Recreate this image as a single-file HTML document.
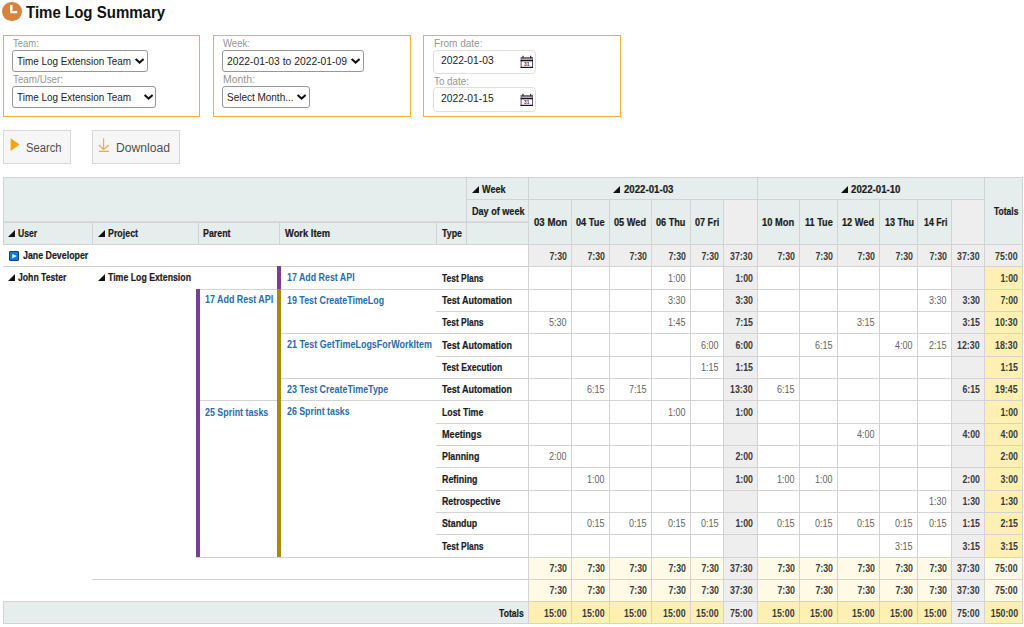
<!DOCTYPE html>
<html><head><meta charset="utf-8"><title>Time Log Summary</title>
<style>
html,body{margin:0;padding:0;background:#fff;}
body{width:1024px;height:627px;position:relative;overflow:hidden;font-family:"Liberation Sans",sans-serif;}
.r{position:absolute}
.t{position:absolute;white-space:nowrap;line-height:1;}
.tri{position:absolute;width:0;height:0;border-left:7px solid transparent;border-bottom:7px solid #111;}
.title{position:absolute;left:26px;top:3px;font-size:15px;font-weight:bold;color:#111;white-space:nowrap;line-height:1;}
.clock{position:absolute;left:2px;top:1.5px;width:19.5px;height:19.5px;border-radius:50%;background:#d9823d;}
.box{position:absolute;top:35px;height:80px;border:1px solid #f8ae35;box-sizing:border-box;}
.lbl{position:absolute;font-size:10.5px;color:#8a8a8a;white-space:nowrap;line-height:1;}
.sel{position:absolute;height:22px;border:1px solid #979797;border-radius:3px;background:#fff;box-sizing:border-box;}
.seltxt{position:absolute;font-size:10.5px;color:#222;white-space:nowrap;line-height:1;}
.inp{position:absolute;border:1px solid #dedede;border-radius:4px;background:#fff;box-sizing:border-box;}
.btn{position:absolute;top:130px;height:34px;background:#f6f6f6;border:1px solid #d9d9d9;box-sizing:border-box;}
.btxt{position:absolute;font-size:12.5px;color:#444;white-space:nowrap;line-height:1;}

</style></head><body>
<div class="clock"><svg width="20" height="20" style="position:absolute;left:0;top:0"><path d="M9.3 3.1 V10.1 H15.2" stroke="#fff" stroke-width="2.4" fill="none"/></svg></div>

<div class="box" style="left:3px;width:197px;height:82px"></div>
<div class="box" style="left:213px;width:198px;height:82px"></div>
<div class="box" style="left:423px;width:198px;height:82px"></div>

<div class="sel" style="left:12px;top:50px;width:136px"></div>
<svg class="r" style="left:134px;top:57px" width="11" height="8"><polyline points="1.6,1.9 5.6,5.6 9.6,1.9" stroke="#111" stroke-width="2" fill="none"/></svg>
<div class="sel" style="left:12px;top:86px;width:144px"></div>
<svg class="r" style="left:143px;top:93px" width="11" height="8"><polyline points="1.6,1.9 5.6,5.6 9.6,1.9" stroke="#111" stroke-width="2" fill="none"/></svg>

<div class="sel" style="left:222px;top:50px;width:142px"></div>
<svg class="r" style="left:350px;top:57px" width="11" height="8"><polyline points="1.6,1.9 5.6,5.6 9.6,1.9" stroke="#111" stroke-width="2" fill="none"/></svg>
<div class="sel" style="left:222px;top:86px;width:88px"></div>
<svg class="r" style="left:296px;top:93px" width="11" height="8"><polyline points="1.6,1.9 5.6,5.6 9.6,1.9" stroke="#111" stroke-width="2" fill="none"/></svg>

<div class="inp" style="left:433px;top:50px;width:103px;height:24px"></div>
<svg class="r" style="left:518px;top:54px" width="17" height="16"><rect x="2.6" y="3" width="1" height="11" fill="#6a4a7a"/><rect x="14" y="3" width="1" height="11" fill="#6a4a7a"/><rect x="3" y="3" width="11.5" height="2.6" fill="#7a7a7a"/><rect x="2.6" y="6" width="12.4" height="1.3" fill="#161616"/><rect x="2.6" y="12.8" width="12.4" height="1.2" fill="#161616"/><rect x="4.3" y="1.8" width="1.3" height="2.4" fill="#4a1a5a"/><rect x="12" y="1.8" width="1.3" height="2.4" fill="#4a1a5a"/><text x="8.8" y="11.8" font-size="5" font-family="Liberation Sans" font-weight="bold" text-anchor="middle" fill="#7a2a4a">31</text></svg>
<div class="inp" style="left:433px;top:87px;width:103px;height:25px"></div>
<svg class="r" style="left:518px;top:92px" width="17" height="16"><rect x="2.6" y="3" width="1" height="11" fill="#6a4a7a"/><rect x="14" y="3" width="1" height="11" fill="#6a4a7a"/><rect x="3" y="3" width="11.5" height="2.6" fill="#7a7a7a"/><rect x="2.6" y="6" width="12.4" height="1.3" fill="#161616"/><rect x="2.6" y="12.8" width="12.4" height="1.2" fill="#161616"/><rect x="4.3" y="1.8" width="1.3" height="2.4" fill="#4a1a5a"/><rect x="12" y="1.8" width="1.3" height="2.4" fill="#4a1a5a"/><text x="8.8" y="11.8" font-size="5" font-family="Liberation Sans" font-weight="bold" text-anchor="middle" fill="#7a2a4a">31</text></svg>

<div class="btn" style="left:3px;width:68px"></div>
<svg class="r" style="left:10px;top:138px" width="10" height="14"><polygon points="0.6,0.3 9.5,6.5 0.6,13" fill="#f6a40c"/></svg>
<div class="btn" style="left:92px;width:88px"></div>
<svg class="r" style="left:98px;top:138px" width="12" height="14"><path d="M5.6 0.2 V11.4 M1 7 L5.6 11.5 L10.7 7 M0.9 13.4 H11" stroke="#f7a935" stroke-width="1.15" fill="none"/></svg>
<div class="r" style="left:8.5px;top:251px;width:10.2px;height:9.9px;background:#0b7be2;box-sizing:border-box;border:1px solid #0f3e72;border-radius:1px"></div>
<svg class="r" style="left:8.5px;top:251px" width="11" height="10"><polygon points="3.3,2.9 7.6,5.1 3.3,7.4" fill="#fff"/></svg>

<div id="grid">
<div class="r" style="left:3px;top:177px;width:1020px;height:67px;background:#e5eded"></div>
<div class="r" style="left:723px;top:199px;width:34px;height:45px;background:#eeeeee"></div>
<div class="r" style="left:951px;top:199px;width:33px;height:45px;background:#eeeeee"></div>
<div class="r" style="left:528px;top:244px;width:495px;height:22px;background:#eeeeee"></div>
<div class="r" style="left:723px;top:266px;width:34px;height:23px;background:#eeeeee"></div>
<div class="r" style="left:951px;top:266px;width:33px;height:23px;background:#eeeeee"></div>
<div class="r" style="left:984px;top:266px;width:39px;height:23px;background:#fdf0b2"></div>
<div class="r" style="left:723px;top:289px;width:34px;height:22px;background:#eeeeee"></div>
<div class="r" style="left:951px;top:289px;width:33px;height:22px;background:#eeeeee"></div>
<div class="r" style="left:984px;top:289px;width:39px;height:22px;background:#fdf0b2"></div>
<div class="r" style="left:723px;top:311px;width:34px;height:22px;background:#eeeeee"></div>
<div class="r" style="left:951px;top:311px;width:33px;height:22px;background:#eeeeee"></div>
<div class="r" style="left:984px;top:311px;width:39px;height:22px;background:#fdf0b2"></div>
<div class="r" style="left:723px;top:333px;width:34px;height:23px;background:#eeeeee"></div>
<div class="r" style="left:951px;top:333px;width:33px;height:23px;background:#eeeeee"></div>
<div class="r" style="left:984px;top:333px;width:39px;height:23px;background:#fdf0b2"></div>
<div class="r" style="left:723px;top:356px;width:34px;height:22px;background:#eeeeee"></div>
<div class="r" style="left:951px;top:356px;width:33px;height:22px;background:#eeeeee"></div>
<div class="r" style="left:984px;top:356px;width:39px;height:22px;background:#fdf0b2"></div>
<div class="r" style="left:723px;top:378px;width:34px;height:22px;background:#eeeeee"></div>
<div class="r" style="left:951px;top:378px;width:33px;height:22px;background:#eeeeee"></div>
<div class="r" style="left:984px;top:378px;width:39px;height:22px;background:#fdf0b2"></div>
<div class="r" style="left:723px;top:400px;width:34px;height:23px;background:#eeeeee"></div>
<div class="r" style="left:951px;top:400px;width:33px;height:23px;background:#eeeeee"></div>
<div class="r" style="left:984px;top:400px;width:39px;height:23px;background:#fdf0b2"></div>
<div class="r" style="left:723px;top:423px;width:34px;height:22px;background:#eeeeee"></div>
<div class="r" style="left:951px;top:423px;width:33px;height:22px;background:#eeeeee"></div>
<div class="r" style="left:984px;top:423px;width:39px;height:22px;background:#fdf0b2"></div>
<div class="r" style="left:723px;top:445px;width:34px;height:22px;background:#eeeeee"></div>
<div class="r" style="left:951px;top:445px;width:33px;height:22px;background:#eeeeee"></div>
<div class="r" style="left:984px;top:445px;width:39px;height:22px;background:#fdf0b2"></div>
<div class="r" style="left:723px;top:467px;width:34px;height:23px;background:#eeeeee"></div>
<div class="r" style="left:951px;top:467px;width:33px;height:23px;background:#eeeeee"></div>
<div class="r" style="left:984px;top:467px;width:39px;height:23px;background:#fdf0b2"></div>
<div class="r" style="left:723px;top:490px;width:34px;height:22px;background:#eeeeee"></div>
<div class="r" style="left:951px;top:490px;width:33px;height:22px;background:#eeeeee"></div>
<div class="r" style="left:984px;top:490px;width:39px;height:22px;background:#fdf0b2"></div>
<div class="r" style="left:723px;top:512px;width:34px;height:22px;background:#eeeeee"></div>
<div class="r" style="left:951px;top:512px;width:33px;height:22px;background:#eeeeee"></div>
<div class="r" style="left:984px;top:512px;width:39px;height:22px;background:#fdf0b2"></div>
<div class="r" style="left:723px;top:534px;width:34px;height:23px;background:#eeeeee"></div>
<div class="r" style="left:951px;top:534px;width:33px;height:23px;background:#eeeeee"></div>
<div class="r" style="left:984px;top:534px;width:39px;height:23px;background:#fdf0b2"></div>
<div class="r" style="left:723px;top:557px;width:34px;height:22px;background:#eeeeee"></div>
<div class="r" style="left:951px;top:557px;width:33px;height:22px;background:#eeeeee"></div>
<div class="r" style="left:984px;top:557px;width:39px;height:22px;background:#fefae6"></div>
<div class="r" style="left:528px;top:557px;width:195px;height:22px;background:#fefae6"></div>
<div class="r" style="left:757px;top:557px;width:194px;height:22px;background:#fefae6"></div>
<div class="r" style="left:723px;top:579px;width:34px;height:22px;background:#eeeeee"></div>
<div class="r" style="left:951px;top:579px;width:33px;height:22px;background:#eeeeee"></div>
<div class="r" style="left:984px;top:579px;width:39px;height:22px;background:#fefae6"></div>
<div class="r" style="left:528px;top:579px;width:195px;height:22px;background:#fefae6"></div>
<div class="r" style="left:757px;top:579px;width:194px;height:22px;background:#fefae6"></div>
<div class="r" style="left:723px;top:601px;width:34px;height:22px;background:#eeeeee"></div>
<div class="r" style="left:951px;top:601px;width:33px;height:22px;background:#eeeeee"></div>
<div class="r" style="left:984px;top:601px;width:39px;height:22px;background:#fdf0b2"></div>
<div class="r" style="left:528px;top:601px;width:195px;height:22px;background:#fdf0b2"></div>
<div class="r" style="left:757px;top:601px;width:194px;height:22px;background:#fdf0b2"></div>
<div class="r" style="left:3px;top:601px;width:525px;height:22px;background:#e5eded"></div>
<div class="r" style="left:3px;top:177px;width:1020px;height:1px;background:#d3d3d3"></div>
<div class="r" style="left:466px;top:199px;width:519px;height:1px;background:#d3d3d3"></div>
<div class="r" style="left:3px;top:221px;width:526px;height:1px;background:#dcdcdc"></div>
<div class="r" style="left:3px;top:222px;width:526px;height:1px;background:#d3d3d3"></div>
<div class="r" style="left:3px;top:244px;width:1020px;height:1px;background:#d3d3d3"></div>
<div class="r" style="left:3px;top:266px;width:1020px;height:1px;background:#d3d3d3"></div>
<div class="r" style="left:196px;top:289px;width:827px;height:1px;background:#d3d3d3"></div>
<div class="r" style="left:436px;top:311px;width:587px;height:1px;background:#d3d3d3"></div>
<div class="r" style="left:279px;top:333px;width:744px;height:1px;background:#d3d3d3"></div>
<div class="r" style="left:436px;top:356px;width:587px;height:1px;background:#d3d3d3"></div>
<div class="r" style="left:279px;top:378px;width:744px;height:1px;background:#d3d3d3"></div>
<div class="r" style="left:196px;top:400px;width:827px;height:1px;background:#d3d3d3"></div>
<div class="r" style="left:436px;top:423px;width:587px;height:1px;background:#d3d3d3"></div>
<div class="r" style="left:436px;top:445px;width:587px;height:1px;background:#d3d3d3"></div>
<div class="r" style="left:436px;top:467px;width:587px;height:1px;background:#d3d3d3"></div>
<div class="r" style="left:436px;top:490px;width:587px;height:1px;background:#d3d3d3"></div>
<div class="r" style="left:436px;top:512px;width:587px;height:1px;background:#d3d3d3"></div>
<div class="r" style="left:436px;top:534px;width:587px;height:1px;background:#d3d3d3"></div>
<div class="r" style="left:196px;top:557px;width:827px;height:1px;background:#d3d3d3"></div>
<div class="r" style="left:92px;top:579px;width:931px;height:1px;background:#d3d3d3"></div>
<div class="r" style="left:3px;top:601px;width:1020px;height:1px;background:#d3d3d3"></div>
<div class="r" style="left:3px;top:623px;width:1020px;height:1px;background:#d3d3d3"></div>
<div class="r" style="left:3px;top:177px;width:1px;height:68px;background:#d3d3d3"></div>
<div class="r" style="left:3px;top:601px;width:1px;height:23px;background:#d3d3d3"></div>
<div class="r" style="left:92px;top:222px;width:1px;height:23px;background:#d3d3d3"></div>
<div class="r" style="left:198px;top:222px;width:1px;height:23px;background:#d3d3d3"></div>
<div class="r" style="left:279px;top:222px;width:1px;height:23px;background:#d3d3d3"></div>
<div class="r" style="left:436px;top:222px;width:1px;height:23px;background:#d3d3d3"></div>
<div class="r" style="left:466px;top:177px;width:1px;height:68px;background:#d3d3d3"></div>
<div class="r" style="left:528px;top:177px;width:1px;height:447px;background:#d3d3d3"></div>
<div class="r" style="left:571px;top:199px;width:1px;height:425px;background:#d3d3d3"></div>
<div class="r" style="left:609px;top:199px;width:1px;height:425px;background:#d3d3d3"></div>
<div class="r" style="left:651px;top:199px;width:1px;height:425px;background:#d3d3d3"></div>
<div class="r" style="left:690px;top:199px;width:1px;height:425px;background:#d3d3d3"></div>
<div class="r" style="left:723px;top:199px;width:1px;height:425px;background:#d3d3d3"></div>
<div class="r" style="left:799px;top:199px;width:1px;height:425px;background:#d3d3d3"></div>
<div class="r" style="left:837px;top:199px;width:1px;height:425px;background:#d3d3d3"></div>
<div class="r" style="left:879px;top:199px;width:1px;height:425px;background:#d3d3d3"></div>
<div class="r" style="left:917px;top:199px;width:1px;height:425px;background:#d3d3d3"></div>
<div class="r" style="left:951px;top:199px;width:1px;height:425px;background:#d3d3d3"></div>
<div class="r" style="left:757px;top:177px;width:1px;height:447px;background:#d3d3d3"></div>
<div class="r" style="left:984px;top:177px;width:1px;height:447px;background:#d3d3d3"></div>
<div class="r" style="left:1022px;top:177px;width:1px;height:447px;background:#d3d3d3"></div>
<div class="r" style="left:277px;top:266px;width:4px;height:23px;background:#7a3e96"></div>
<div class="r" style="left:277px;top:289px;width:4px;height:268px;background:#a68a0c"></div>
<div class="r" style="left:196px;top:289px;width:4px;height:268px;background:#7a3e96"></div>
<div class="tri" style="left:8px;top:230px"></div>
<div class="tri" style="left:98px;top:230px"></div>
<div class="tri" style="left:471.6px;top:186px"></div>
<div class="tri" style="left:613.4px;top:186px"></div>
<div class="tri" style="left:840.5px;top:186px"></div>
<div class="tri" style="left:7.8px;top:274.4px"></div>
<div class="tri" style="left:97.5px;top:274.3px"></div>
<span class="t" style="left:482.30px;top:184.84px;font-size:10px;font-weight:bold;color:#1b1b1b;-webkit-text-stroke:0.2px;transform:scaleX(0.9093);transform-origin:0 0">Week</span>
<span class="t" style="left:623.60px;top:184.73px;font-size:10px;font-weight:bold;color:#1b1b1b;-webkit-text-stroke:0.2px;transform:scaleX(0.9657);transform-origin:0 0">2022-01-03</span>
<span class="t" style="left:851.40px;top:184.73px;font-size:10px;font-weight:bold;color:#1b1b1b;-webkit-text-stroke:0.2px;transform:scaleX(0.9676);transform-origin:0 0">2022-01-10</span>
<span class="t" style="left:471.80px;top:207.13px;font-size:10px;font-weight:bold;color:#1b1b1b;-webkit-text-stroke:0.2px;transform:scaleX(0.9081);transform-origin:0 0">Day of week</span>
<span class="t" style="left:533.70px;top:217.84px;font-size:10px;font-weight:bold;color:#1b1b1b;-webkit-text-stroke:0.2px;transform:scaleX(0.9636);transform-origin:0 0">03 Mon</span>
<span class="t" style="left:576.30px;top:217.84px;font-size:10px;font-weight:bold;color:#1b1b1b;-webkit-text-stroke:0.2px;transform:scaleX(0.9212);transform-origin:0 0">04 Tue</span>
<span class="t" style="left:614.00px;top:217.84px;font-size:10px;font-weight:bold;color:#1b1b1b;-webkit-text-stroke:0.2px;transform:scaleX(0.9184);transform-origin:0 0">05 Wed</span>
<span class="t" style="left:656.20px;top:217.84px;font-size:10px;font-weight:bold;color:#1b1b1b;-webkit-text-stroke:0.2px;transform:scaleX(0.9121);transform-origin:0 0">06 Thu</span>
<span class="t" style="left:694.90px;top:217.84px;font-size:10px;font-weight:bold;color:#1b1b1b;-webkit-text-stroke:0.2px;transform:scaleX(0.9068);transform-origin:0 0">07 Fri</span>
<span class="t" style="left:762.30px;top:217.84px;font-size:10px;font-weight:bold;color:#1b1b1b;-webkit-text-stroke:0.2px;transform:scaleX(0.9317);transform-origin:0 0">10 Mon</span>
<span class="t" style="left:804.70px;top:217.84px;font-size:10px;font-weight:bold;color:#1b1b1b;-webkit-text-stroke:0.2px;transform:scaleX(0.9115);transform-origin:0 0">11 Tue</span>
<span class="t" style="left:842.30px;top:217.84px;font-size:10px;font-weight:bold;color:#1b1b1b;-webkit-text-stroke:0.2px;transform:scaleX(0.9213);transform-origin:0 0">12 Wed</span>
<span class="t" style="left:884.50px;top:217.84px;font-size:10px;font-weight:bold;color:#1b1b1b;-webkit-text-stroke:0.2px;transform:scaleX(0.8997);transform-origin:0 0">13 Thu</span>
<span class="t" style="left:923.50px;top:217.84px;font-size:10px;font-weight:bold;color:#1b1b1b;-webkit-text-stroke:0.2px;transform:scaleX(0.8806);transform-origin:0 0">14 Fri</span>
<span class="t" style="left:993.60px;top:207.03px;font-size:10px;font-weight:bold;color:#1b1b1b;-webkit-text-stroke:0.2px;transform:scaleX(0.8496);transform-origin:0 0">Totals</span>
<span class="t" style="left:18.20px;top:228.53px;font-size:10px;font-weight:bold;color:#1b1b1b;-webkit-text-stroke:0.2px;transform:scaleX(0.8584);transform-origin:0 0">User</span>
<span class="t" style="left:108.00px;top:228.53px;font-size:10px;font-weight:bold;color:#1b1b1b;-webkit-text-stroke:0.2px;transform:scaleX(0.8848);transform-origin:0 0">Project</span>
<span class="t" style="left:202.90px;top:228.53px;font-size:10px;font-weight:bold;color:#1b1b1b;-webkit-text-stroke:0.2px;transform:scaleX(0.8835);transform-origin:0 0">Parent</span>
<span class="t" style="left:285.00px;top:228.53px;font-size:10px;font-weight:bold;color:#1b1b1b;-webkit-text-stroke:0.2px;transform:scaleX(0.9342);transform-origin:0 0">Work Item</span>
<span class="t" style="left:442.00px;top:228.53px;font-size:10px;font-weight:bold;color:#1b1b1b;-webkit-text-stroke:0.2px;transform:scaleX(0.8846);transform-origin:0 0">Type</span>
<span class="t" style="left:22.70px;top:250.73px;font-size:10px;font-weight:bold;color:#1b1b1b;-webkit-text-stroke:0.2px;transform:scaleX(0.8832);transform-origin:0 0">Jane Developer</span>
<span class="t" style="left:18.00px;top:273.04px;font-size:10px;font-weight:bold;color:#1b1b1b;-webkit-text-stroke:0.2px;transform:scaleX(0.8653);transform-origin:0 0">John Tester</span>
<span class="t" style="left:108.00px;top:272.84px;font-size:10px;font-weight:bold;color:#1b1b1b;-webkit-text-stroke:0.2px;transform:scaleX(0.8751);transform-origin:0 0">Time Log Extension</span>
<span class="t" style="left:287.20px;top:272.54px;font-size:10px;font-weight:bold;color:#266cae;transform:scaleX(0.8837);transform-origin:0 0">17 Add Rest API</span>
<span class="t" style="left:204.80px;top:295.34px;font-size:10px;font-weight:bold;color:#266cae;transform:scaleX(0.8915);transform-origin:0 0">17 Add Rest API</span>
<span class="t" style="left:286.90px;top:295.54px;font-size:10px;font-weight:bold;color:#266cae;transform:scaleX(0.8898);transform-origin:0 0">19 Test CreateTimeLog</span>
<span class="t" style="left:287.00px;top:340.14px;font-size:10px;font-weight:bold;color:#266cae;transform:scaleX(0.8966);transform-origin:0 0">21 Test GetTimeLogsForWorkItem</span>
<span class="t" style="left:287.20px;top:385.14px;font-size:10px;font-weight:bold;color:#266cae;transform:scaleX(0.8934);transform-origin:0 0">23 Test CreateTimeType</span>
<span class="t" style="left:204.60px;top:407.54px;font-size:10px;font-weight:bold;color:#266cae;transform:scaleX(0.8896);transform-origin:0 0">25 Sprint tasks</span>
<span class="t" style="left:287.20px;top:407.14px;font-size:10px;font-weight:bold;color:#266cae;transform:scaleX(0.8798);transform-origin:0 0">26 Sprint tasks</span>
<span class="t" style="left:441.80px;top:273.74px;font-size:10px;font-weight:bold;color:#1b1b1b;-webkit-text-stroke:0.2px;transform:scaleX(0.8421);transform-origin:0 0">Test Plans</span>
<span class="t" style="left:441.80px;top:296.06px;font-size:10px;font-weight:bold;color:#1b1b1b;-webkit-text-stroke:0.2px;transform:scaleX(0.9000);transform-origin:0 0">Test Automation</span>
<span class="t" style="left:441.80px;top:318.39px;font-size:10px;font-weight:bold;color:#1b1b1b;-webkit-text-stroke:0.2px;transform:scaleX(0.8421);transform-origin:0 0">Test Plans</span>
<span class="t" style="left:441.80px;top:340.73px;font-size:10px;font-weight:bold;color:#1b1b1b;-webkit-text-stroke:0.2px;transform:scaleX(0.9000);transform-origin:0 0">Test Automation</span>
<span class="t" style="left:441.80px;top:363.06px;font-size:10px;font-weight:bold;color:#1b1b1b;-webkit-text-stroke:0.2px;transform:scaleX(0.8552);transform-origin:0 0">Test Execution</span>
<span class="t" style="left:441.80px;top:385.38px;font-size:10px;font-weight:bold;color:#1b1b1b;-webkit-text-stroke:0.2px;transform:scaleX(0.9000);transform-origin:0 0">Test Automation</span>
<span class="t" style="left:441.80px;top:407.72px;font-size:10px;font-weight:bold;color:#1b1b1b;-webkit-text-stroke:0.2px;transform:scaleX(0.8778);transform-origin:0 0">Lost Time</span>
<span class="t" style="left:441.80px;top:430.05px;font-size:10px;font-weight:bold;color:#1b1b1b;-webkit-text-stroke:0.2px;transform:scaleX(0.9113);transform-origin:0 0">Meetings</span>
<span class="t" style="left:441.80px;top:452.38px;font-size:10px;font-weight:bold;color:#1b1b1b;-webkit-text-stroke:0.2px;transform:scaleX(0.8832);transform-origin:0 0">Planning</span>
<span class="t" style="left:441.80px;top:474.70px;font-size:10px;font-weight:bold;color:#1b1b1b;-webkit-text-stroke:0.2px;transform:scaleX(0.8875);transform-origin:0 0">Refining</span>
<span class="t" style="left:441.80px;top:497.03px;font-size:10px;font-weight:bold;color:#1b1b1b;-webkit-text-stroke:0.2px;transform:scaleX(0.8815);transform-origin:0 0">Retrospective</span>
<span class="t" style="left:441.80px;top:519.36px;font-size:10px;font-weight:bold;color:#1b1b1b;-webkit-text-stroke:0.2px;transform:scaleX(0.8775);transform-origin:0 0">Standup</span>
<span class="t" style="left:441.80px;top:541.69px;font-size:10px;font-weight:bold;color:#1b1b1b;-webkit-text-stroke:0.2px;transform:scaleX(0.8421);transform-origin:0 0">Test Plans</span>
<span class="t" style="right:500.00px;top:608.93px;font-size:10px;font-weight:bold;color:#1b1b1b;-webkit-text-stroke:0.2px;transform:scaleX(0.8566);transform-origin:100% 0">Totals</span>
<span class="t" style="right:457.30px;top:251.84px;font-size:10px;font-weight:bold;color:#3a3a3a;transform:scaleX(0.8800);transform-origin:100% 0">7:30</span>
<span class="t" style="right:419.30px;top:251.84px;font-size:10px;font-weight:bold;color:#3a3a3a;transform:scaleX(0.8800);transform-origin:100% 0">7:30</span>
<span class="t" style="right:377.30px;top:251.84px;font-size:10px;font-weight:bold;color:#3a3a3a;transform:scaleX(0.8800);transform-origin:100% 0">7:30</span>
<span class="t" style="right:338.30px;top:251.84px;font-size:10px;font-weight:bold;color:#3a3a3a;transform:scaleX(0.8800);transform-origin:100% 0">7:30</span>
<span class="t" style="right:305.30px;top:251.84px;font-size:10px;font-weight:bold;color:#3a3a3a;transform:scaleX(0.8800);transform-origin:100% 0">7:30</span>
<span class="t" style="right:271.30px;top:251.84px;font-size:10px;font-weight:bold;color:#3a3a3a;transform:scaleX(0.8800);transform-origin:100% 0">37:30</span>
<span class="t" style="right:229.30px;top:251.84px;font-size:10px;font-weight:bold;color:#3a3a3a;transform:scaleX(0.8800);transform-origin:100% 0">7:30</span>
<span class="t" style="right:191.30px;top:251.84px;font-size:10px;font-weight:bold;color:#3a3a3a;transform:scaleX(0.8800);transform-origin:100% 0">7:30</span>
<span class="t" style="right:149.30px;top:251.84px;font-size:10px;font-weight:bold;color:#3a3a3a;transform:scaleX(0.8800);transform-origin:100% 0">7:30</span>
<span class="t" style="right:111.30px;top:251.84px;font-size:10px;font-weight:bold;color:#3a3a3a;transform:scaleX(0.8800);transform-origin:100% 0">7:30</span>
<span class="t" style="right:77.30px;top:251.84px;font-size:10px;font-weight:bold;color:#3a3a3a;transform:scaleX(0.8800);transform-origin:100% 0">7:30</span>
<span class="t" style="right:44.30px;top:251.84px;font-size:10px;font-weight:bold;color:#3a3a3a;transform:scaleX(0.8800);transform-origin:100% 0">37:30</span>
<span class="t" style="right:6.30px;top:251.84px;font-size:10px;font-weight:bold;color:#3a3a3a;transform:scaleX(0.8800);transform-origin:100% 0">75:00</span>
<span class="t" style="right:338.30px;top:273.74px;font-size:10px;color:#636363;transform:scaleX(0.9000);transform-origin:100% 0">1:00</span>
<span class="t" style="right:271.30px;top:273.74px;font-size:10px;font-weight:bold;color:#3a3a3a;transform:scaleX(0.8800);transform-origin:100% 0">1:00</span>
<span class="t" style="right:6.30px;top:273.74px;font-size:10px;font-weight:bold;color:#3a3a3a;transform:scaleX(0.8800);transform-origin:100% 0">1:00</span>
<span class="t" style="right:338.30px;top:296.06px;font-size:10px;color:#636363;transform:scaleX(0.9000);transform-origin:100% 0">3:30</span>
<span class="t" style="right:271.30px;top:296.06px;font-size:10px;font-weight:bold;color:#3a3a3a;transform:scaleX(0.8800);transform-origin:100% 0">3:30</span>
<span class="t" style="right:77.30px;top:296.06px;font-size:10px;color:#636363;transform:scaleX(0.9000);transform-origin:100% 0">3:30</span>
<span class="t" style="right:44.30px;top:296.06px;font-size:10px;font-weight:bold;color:#3a3a3a;transform:scaleX(0.8800);transform-origin:100% 0">3:30</span>
<span class="t" style="right:6.30px;top:296.06px;font-size:10px;font-weight:bold;color:#3a3a3a;transform:scaleX(0.8800);transform-origin:100% 0">7:00</span>
<span class="t" style="right:457.30px;top:318.39px;font-size:10px;color:#636363;transform:scaleX(0.9000);transform-origin:100% 0">5:30</span>
<span class="t" style="right:338.30px;top:318.39px;font-size:10px;color:#636363;transform:scaleX(0.9000);transform-origin:100% 0">1:45</span>
<span class="t" style="right:271.30px;top:318.39px;font-size:10px;font-weight:bold;color:#3a3a3a;transform:scaleX(0.8800);transform-origin:100% 0">7:15</span>
<span class="t" style="right:149.30px;top:318.39px;font-size:10px;color:#636363;transform:scaleX(0.9000);transform-origin:100% 0">3:15</span>
<span class="t" style="right:44.30px;top:318.39px;font-size:10px;font-weight:bold;color:#3a3a3a;transform:scaleX(0.8800);transform-origin:100% 0">3:15</span>
<span class="t" style="right:6.30px;top:318.39px;font-size:10px;font-weight:bold;color:#3a3a3a;transform:scaleX(0.8800);transform-origin:100% 0">10:30</span>
<span class="t" style="right:305.30px;top:340.73px;font-size:10px;color:#636363;transform:scaleX(0.9000);transform-origin:100% 0">6:00</span>
<span class="t" style="right:271.30px;top:340.73px;font-size:10px;font-weight:bold;color:#3a3a3a;transform:scaleX(0.8800);transform-origin:100% 0">6:00</span>
<span class="t" style="right:191.30px;top:340.73px;font-size:10px;color:#636363;transform:scaleX(0.9000);transform-origin:100% 0">6:15</span>
<span class="t" style="right:111.30px;top:340.73px;font-size:10px;color:#636363;transform:scaleX(0.9000);transform-origin:100% 0">4:00</span>
<span class="t" style="right:77.30px;top:340.73px;font-size:10px;color:#636363;transform:scaleX(0.9000);transform-origin:100% 0">2:15</span>
<span class="t" style="right:44.30px;top:340.73px;font-size:10px;font-weight:bold;color:#3a3a3a;transform:scaleX(0.8800);transform-origin:100% 0">12:30</span>
<span class="t" style="right:6.30px;top:340.73px;font-size:10px;font-weight:bold;color:#3a3a3a;transform:scaleX(0.8800);transform-origin:100% 0">18:30</span>
<span class="t" style="right:305.30px;top:363.06px;font-size:10px;color:#636363;transform:scaleX(0.9000);transform-origin:100% 0">1:15</span>
<span class="t" style="right:271.30px;top:363.06px;font-size:10px;font-weight:bold;color:#3a3a3a;transform:scaleX(0.8800);transform-origin:100% 0">1:15</span>
<span class="t" style="right:6.30px;top:363.06px;font-size:10px;font-weight:bold;color:#3a3a3a;transform:scaleX(0.8800);transform-origin:100% 0">1:15</span>
<span class="t" style="right:419.30px;top:385.38px;font-size:10px;color:#636363;transform:scaleX(0.9000);transform-origin:100% 0">6:15</span>
<span class="t" style="right:377.30px;top:385.38px;font-size:10px;color:#636363;transform:scaleX(0.9000);transform-origin:100% 0">7:15</span>
<span class="t" style="right:271.30px;top:385.38px;font-size:10px;font-weight:bold;color:#3a3a3a;transform:scaleX(0.8800);transform-origin:100% 0">13:30</span>
<span class="t" style="right:229.30px;top:385.38px;font-size:10px;color:#636363;transform:scaleX(0.9000);transform-origin:100% 0">6:15</span>
<span class="t" style="right:44.30px;top:385.38px;font-size:10px;font-weight:bold;color:#3a3a3a;transform:scaleX(0.8800);transform-origin:100% 0">6:15</span>
<span class="t" style="right:6.30px;top:385.38px;font-size:10px;font-weight:bold;color:#3a3a3a;transform:scaleX(0.8800);transform-origin:100% 0">19:45</span>
<span class="t" style="right:338.30px;top:407.72px;font-size:10px;color:#636363;transform:scaleX(0.9000);transform-origin:100% 0">1:00</span>
<span class="t" style="right:271.30px;top:407.72px;font-size:10px;font-weight:bold;color:#3a3a3a;transform:scaleX(0.8800);transform-origin:100% 0">1:00</span>
<span class="t" style="right:6.30px;top:407.72px;font-size:10px;font-weight:bold;color:#3a3a3a;transform:scaleX(0.8800);transform-origin:100% 0">1:00</span>
<span class="t" style="right:149.30px;top:430.05px;font-size:10px;color:#636363;transform:scaleX(0.9000);transform-origin:100% 0">4:00</span>
<span class="t" style="right:44.30px;top:430.05px;font-size:10px;font-weight:bold;color:#3a3a3a;transform:scaleX(0.8800);transform-origin:100% 0">4:00</span>
<span class="t" style="right:6.30px;top:430.05px;font-size:10px;font-weight:bold;color:#3a3a3a;transform:scaleX(0.8800);transform-origin:100% 0">4:00</span>
<span class="t" style="right:457.30px;top:452.38px;font-size:10px;color:#636363;transform:scaleX(0.9000);transform-origin:100% 0">2:00</span>
<span class="t" style="right:271.30px;top:452.38px;font-size:10px;font-weight:bold;color:#3a3a3a;transform:scaleX(0.8800);transform-origin:100% 0">2:00</span>
<span class="t" style="right:6.30px;top:452.38px;font-size:10px;font-weight:bold;color:#3a3a3a;transform:scaleX(0.8800);transform-origin:100% 0">2:00</span>
<span class="t" style="right:419.30px;top:474.70px;font-size:10px;color:#636363;transform:scaleX(0.9000);transform-origin:100% 0">1:00</span>
<span class="t" style="right:271.30px;top:474.70px;font-size:10px;font-weight:bold;color:#3a3a3a;transform:scaleX(0.8800);transform-origin:100% 0">1:00</span>
<span class="t" style="right:229.30px;top:474.70px;font-size:10px;color:#636363;transform:scaleX(0.9000);transform-origin:100% 0">1:00</span>
<span class="t" style="right:191.30px;top:474.70px;font-size:10px;color:#636363;transform:scaleX(0.9000);transform-origin:100% 0">1:00</span>
<span class="t" style="right:44.30px;top:474.70px;font-size:10px;font-weight:bold;color:#3a3a3a;transform:scaleX(0.8800);transform-origin:100% 0">2:00</span>
<span class="t" style="right:6.30px;top:474.70px;font-size:10px;font-weight:bold;color:#3a3a3a;transform:scaleX(0.8800);transform-origin:100% 0">3:00</span>
<span class="t" style="right:77.30px;top:497.03px;font-size:10px;color:#636363;transform:scaleX(0.9000);transform-origin:100% 0">1:30</span>
<span class="t" style="right:44.30px;top:497.03px;font-size:10px;font-weight:bold;color:#3a3a3a;transform:scaleX(0.8800);transform-origin:100% 0">1:30</span>
<span class="t" style="right:6.30px;top:497.03px;font-size:10px;font-weight:bold;color:#3a3a3a;transform:scaleX(0.8800);transform-origin:100% 0">1:30</span>
<span class="t" style="right:419.30px;top:519.36px;font-size:10px;color:#636363;transform:scaleX(0.9000);transform-origin:100% 0">0:15</span>
<span class="t" style="right:377.30px;top:519.36px;font-size:10px;color:#636363;transform:scaleX(0.9000);transform-origin:100% 0">0:15</span>
<span class="t" style="right:338.30px;top:519.36px;font-size:10px;color:#636363;transform:scaleX(0.9000);transform-origin:100% 0">0:15</span>
<span class="t" style="right:305.30px;top:519.36px;font-size:10px;color:#636363;transform:scaleX(0.9000);transform-origin:100% 0">0:15</span>
<span class="t" style="right:271.30px;top:519.36px;font-size:10px;font-weight:bold;color:#3a3a3a;transform:scaleX(0.8800);transform-origin:100% 0">1:00</span>
<span class="t" style="right:229.30px;top:519.36px;font-size:10px;color:#636363;transform:scaleX(0.9000);transform-origin:100% 0">0:15</span>
<span class="t" style="right:191.30px;top:519.36px;font-size:10px;color:#636363;transform:scaleX(0.9000);transform-origin:100% 0">0:15</span>
<span class="t" style="right:149.30px;top:519.36px;font-size:10px;color:#636363;transform:scaleX(0.9000);transform-origin:100% 0">0:15</span>
<span class="t" style="right:111.30px;top:519.36px;font-size:10px;color:#636363;transform:scaleX(0.9000);transform-origin:100% 0">0:15</span>
<span class="t" style="right:77.30px;top:519.36px;font-size:10px;color:#636363;transform:scaleX(0.9000);transform-origin:100% 0">0:15</span>
<span class="t" style="right:44.30px;top:519.36px;font-size:10px;font-weight:bold;color:#3a3a3a;transform:scaleX(0.8800);transform-origin:100% 0">1:15</span>
<span class="t" style="right:6.30px;top:519.36px;font-size:10px;font-weight:bold;color:#3a3a3a;transform:scaleX(0.8800);transform-origin:100% 0">2:15</span>
<span class="t" style="right:111.30px;top:541.69px;font-size:10px;color:#636363;transform:scaleX(0.9000);transform-origin:100% 0">3:15</span>
<span class="t" style="right:44.30px;top:541.69px;font-size:10px;font-weight:bold;color:#3a3a3a;transform:scaleX(0.8800);transform-origin:100% 0">3:15</span>
<span class="t" style="right:6.30px;top:541.69px;font-size:10px;font-weight:bold;color:#3a3a3a;transform:scaleX(0.8800);transform-origin:100% 0">3:15</span>
<span class="t" style="right:457.30px;top:564.02px;font-size:10px;font-weight:bold;color:#3a3a3a;transform:scaleX(0.8800);transform-origin:100% 0">7:30</span>
<span class="t" style="right:419.30px;top:564.02px;font-size:10px;font-weight:bold;color:#3a3a3a;transform:scaleX(0.8800);transform-origin:100% 0">7:30</span>
<span class="t" style="right:377.30px;top:564.02px;font-size:10px;font-weight:bold;color:#3a3a3a;transform:scaleX(0.8800);transform-origin:100% 0">7:30</span>
<span class="t" style="right:338.30px;top:564.02px;font-size:10px;font-weight:bold;color:#3a3a3a;transform:scaleX(0.8800);transform-origin:100% 0">7:30</span>
<span class="t" style="right:305.30px;top:564.02px;font-size:10px;font-weight:bold;color:#3a3a3a;transform:scaleX(0.8800);transform-origin:100% 0">7:30</span>
<span class="t" style="right:271.30px;top:564.02px;font-size:10px;font-weight:bold;color:#3a3a3a;transform:scaleX(0.8800);transform-origin:100% 0">37:30</span>
<span class="t" style="right:229.30px;top:564.02px;font-size:10px;font-weight:bold;color:#3a3a3a;transform:scaleX(0.8800);transform-origin:100% 0">7:30</span>
<span class="t" style="right:191.30px;top:564.02px;font-size:10px;font-weight:bold;color:#3a3a3a;transform:scaleX(0.8800);transform-origin:100% 0">7:30</span>
<span class="t" style="right:149.30px;top:564.02px;font-size:10px;font-weight:bold;color:#3a3a3a;transform:scaleX(0.8800);transform-origin:100% 0">7:30</span>
<span class="t" style="right:111.30px;top:564.02px;font-size:10px;font-weight:bold;color:#3a3a3a;transform:scaleX(0.8800);transform-origin:100% 0">7:30</span>
<span class="t" style="right:77.30px;top:564.02px;font-size:10px;font-weight:bold;color:#3a3a3a;transform:scaleX(0.8800);transform-origin:100% 0">7:30</span>
<span class="t" style="right:44.30px;top:564.02px;font-size:10px;font-weight:bold;color:#3a3a3a;transform:scaleX(0.8800);transform-origin:100% 0">37:30</span>
<span class="t" style="right:6.30px;top:564.02px;font-size:10px;font-weight:bold;color:#3a3a3a;transform:scaleX(0.8800);transform-origin:100% 0">75:00</span>
<span class="t" style="right:457.30px;top:586.35px;font-size:10px;font-weight:bold;color:#3a3a3a;transform:scaleX(0.8800);transform-origin:100% 0">7:30</span>
<span class="t" style="right:419.30px;top:586.35px;font-size:10px;font-weight:bold;color:#3a3a3a;transform:scaleX(0.8800);transform-origin:100% 0">7:30</span>
<span class="t" style="right:377.30px;top:586.35px;font-size:10px;font-weight:bold;color:#3a3a3a;transform:scaleX(0.8800);transform-origin:100% 0">7:30</span>
<span class="t" style="right:338.30px;top:586.35px;font-size:10px;font-weight:bold;color:#3a3a3a;transform:scaleX(0.8800);transform-origin:100% 0">7:30</span>
<span class="t" style="right:305.30px;top:586.35px;font-size:10px;font-weight:bold;color:#3a3a3a;transform:scaleX(0.8800);transform-origin:100% 0">7:30</span>
<span class="t" style="right:271.30px;top:586.35px;font-size:10px;font-weight:bold;color:#3a3a3a;transform:scaleX(0.8800);transform-origin:100% 0">37:30</span>
<span class="t" style="right:229.30px;top:586.35px;font-size:10px;font-weight:bold;color:#3a3a3a;transform:scaleX(0.8800);transform-origin:100% 0">7:30</span>
<span class="t" style="right:191.30px;top:586.35px;font-size:10px;font-weight:bold;color:#3a3a3a;transform:scaleX(0.8800);transform-origin:100% 0">7:30</span>
<span class="t" style="right:149.30px;top:586.35px;font-size:10px;font-weight:bold;color:#3a3a3a;transform:scaleX(0.8800);transform-origin:100% 0">7:30</span>
<span class="t" style="right:111.30px;top:586.35px;font-size:10px;font-weight:bold;color:#3a3a3a;transform:scaleX(0.8800);transform-origin:100% 0">7:30</span>
<span class="t" style="right:77.30px;top:586.35px;font-size:10px;font-weight:bold;color:#3a3a3a;transform:scaleX(0.8800);transform-origin:100% 0">7:30</span>
<span class="t" style="right:44.30px;top:586.35px;font-size:10px;font-weight:bold;color:#3a3a3a;transform:scaleX(0.8800);transform-origin:100% 0">37:30</span>
<span class="t" style="right:6.30px;top:586.35px;font-size:10px;font-weight:bold;color:#3a3a3a;transform:scaleX(0.8800);transform-origin:100% 0">75:00</span>
<span class="t" style="right:457.30px;top:608.68px;font-size:10px;font-weight:bold;color:#3a3a3a;transform:scaleX(0.8800);transform-origin:100% 0">15:00</span>
<span class="t" style="right:419.30px;top:608.68px;font-size:10px;font-weight:bold;color:#3a3a3a;transform:scaleX(0.8800);transform-origin:100% 0">15:00</span>
<span class="t" style="right:377.30px;top:608.68px;font-size:10px;font-weight:bold;color:#3a3a3a;transform:scaleX(0.8800);transform-origin:100% 0">15:00</span>
<span class="t" style="right:338.30px;top:608.68px;font-size:10px;font-weight:bold;color:#3a3a3a;transform:scaleX(0.8800);transform-origin:100% 0">15:00</span>
<span class="t" style="right:305.30px;top:608.68px;font-size:10px;font-weight:bold;color:#3a3a3a;transform:scaleX(0.8800);transform-origin:100% 0">15:00</span>
<span class="t" style="right:271.30px;top:608.68px;font-size:10px;font-weight:bold;color:#3a3a3a;transform:scaleX(0.8800);transform-origin:100% 0">75:00</span>
<span class="t" style="right:229.30px;top:608.68px;font-size:10px;font-weight:bold;color:#3a3a3a;transform:scaleX(0.8800);transform-origin:100% 0">15:00</span>
<span class="t" style="right:191.30px;top:608.68px;font-size:10px;font-weight:bold;color:#3a3a3a;transform:scaleX(0.8800);transform-origin:100% 0">15:00</span>
<span class="t" style="right:149.30px;top:608.68px;font-size:10px;font-weight:bold;color:#3a3a3a;transform:scaleX(0.8800);transform-origin:100% 0">15:00</span>
<span class="t" style="right:111.30px;top:608.68px;font-size:10px;font-weight:bold;color:#3a3a3a;transform:scaleX(0.8800);transform-origin:100% 0">15:00</span>
<span class="t" style="right:77.30px;top:608.68px;font-size:10px;font-weight:bold;color:#3a3a3a;transform:scaleX(0.8800);transform-origin:100% 0">15:00</span>
<span class="t" style="right:44.30px;top:608.68px;font-size:10px;font-weight:bold;color:#3a3a3a;transform:scaleX(0.8800);transform-origin:100% 0">75:00</span>
<span class="t" style="right:6.30px;top:608.68px;font-size:10px;font-weight:bold;color:#3a3a3a;transform:scaleX(0.8800);transform-origin:100% 0">150:00</span>
<span class="t" style="left:26.40px;top:4.03px;font-size:16.5px;font-weight:bold;color:#111;transform:scaleX(0.9108);transform-origin:0 0">Time Log Summary</span>
<span class="t" style="left:12.50px;top:38.11px;font-size:10.5px;color:#959595;transform:scaleX(0.9023);transform-origin:0 0">Team:</span>
<span class="t" style="left:12.50px;top:74.11px;font-size:10.5px;color:#959595;transform:scaleX(0.9313);transform-origin:0 0">Team/User:</span>
<span class="t" style="left:222.50px;top:38.11px;font-size:10.5px;color:#959595;transform:scaleX(0.9128);transform-origin:0 0">Week:</span>
<span class="t" style="left:222.50px;top:74.11px;font-size:10.5px;color:#959595;transform:scaleX(0.9966);transform-origin:0 0">Month:</span>
<span class="t" style="left:433.50px;top:38.31px;font-size:10.5px;color:#959595;transform:scaleX(0.9551);transform-origin:0 0">From date:</span>
<span class="t" style="left:433.50px;top:75.91px;font-size:10.5px;color:#959595;transform:scaleX(0.9365);transform-origin:0 0">To date:</span>
<span class="t" style="left:17.00px;top:56.06px;font-size:10.8px;color:#222;transform:scaleX(0.9176);transform-origin:0 0">Time Log Extension Team</span>
<span class="t" style="left:17.00px;top:92.06px;font-size:10.8px;color:#222;transform:scaleX(0.9176);transform-origin:0 0">Time Log Extension Team</span>
<span class="t" style="left:227.30px;top:56.36px;font-size:10.8px;color:#222;transform:scaleX(0.9564);transform-origin:0 0">2022-01-03 to 2022-01-09</span>
<span class="t" style="left:227.30px;top:92.26px;font-size:10.8px;color:#222;transform:scaleX(0.9234);transform-origin:0 0">Select Month...</span>
<span class="t" style="left:440.80px;top:55.26px;font-size:10.8px;color:#222;transform:scaleX(0.9523);transform-origin:0 0">2022-01-03</span>
<span class="t" style="left:440.80px;top:92.86px;font-size:10.8px;color:#222;transform:scaleX(0.9523);transform-origin:0 0">2022-01-15</span>
<span class="t" style="left:26.00px;top:142.22px;font-size:12.5px;color:#505050;transform:scaleX(0.8963);transform-origin:0 0">Search</span>
<span class="t" style="left:115.60px;top:142.22px;font-size:12.5px;color:#505050;transform:scaleX(0.9713);transform-origin:0 0">Download</span>
</div>
</body></html>
